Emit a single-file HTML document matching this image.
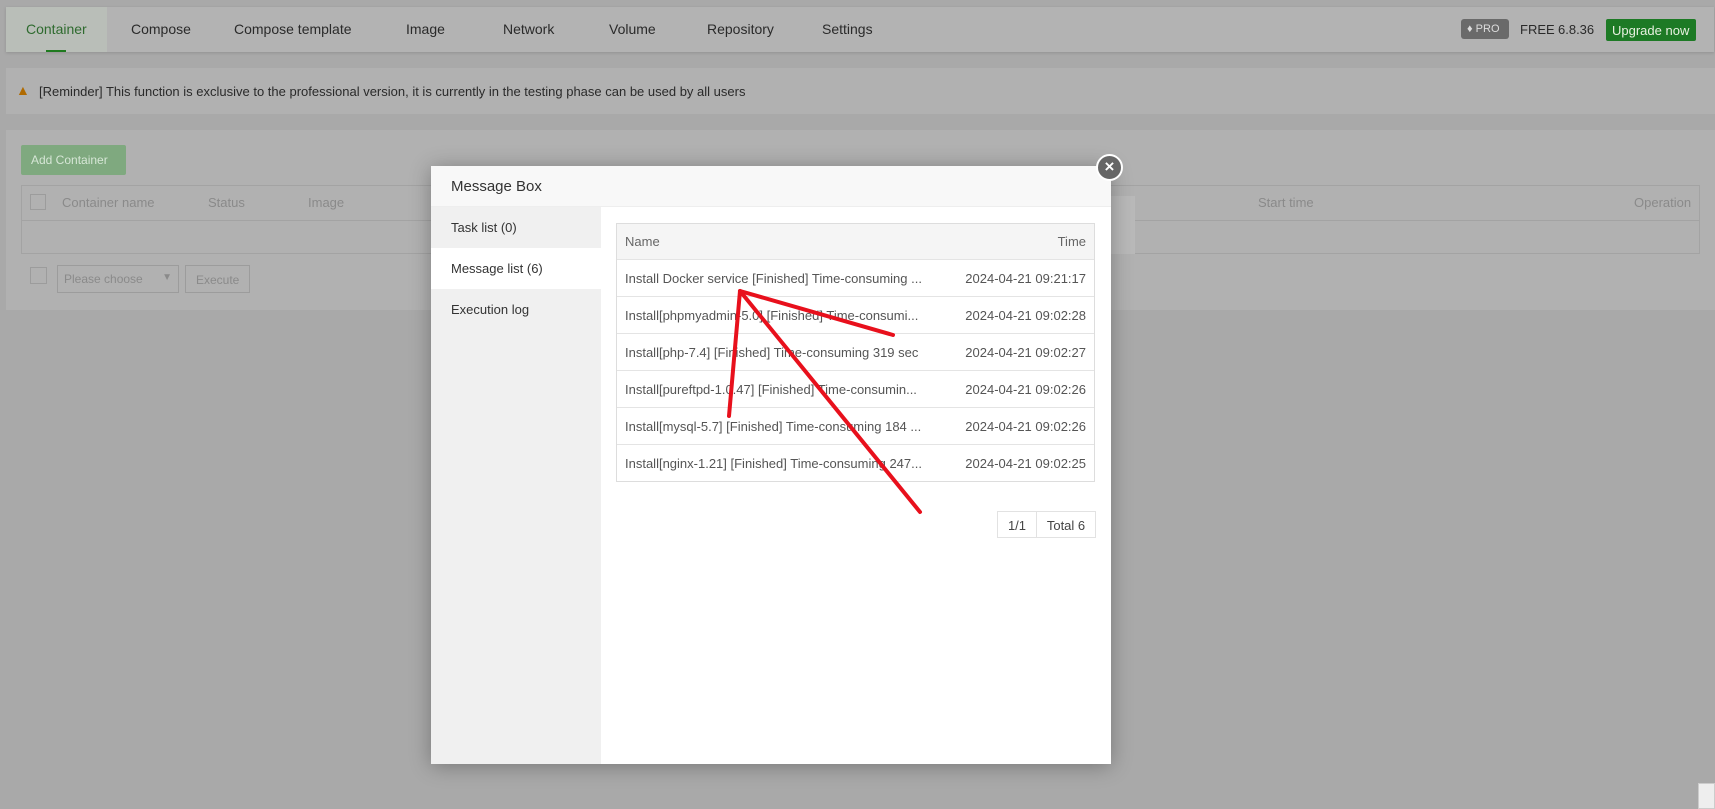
<!DOCTYPE html>
<html><head><meta charset="utf-8"><style>
*{box-sizing:border-box;margin:0;padding:0}
body{width:1715px;height:809px;background:#a9a9a9;font-family:"Liberation Sans",sans-serif;position:relative;overflow:hidden;color:#333}
.abs{position:absolute;white-space:nowrap}
.nav{left:6px;top:7px;width:1708px;height:45px;background:#b3b3b3;box-shadow:0 1px 3px rgba(0,0,0,.15)}
.nav span{position:absolute;top:14px;font-size:14px;color:#2a2a2a}
.rem{left:6px;top:68px;width:1709px;height:46px;background:#b1b1b1;font-size:13px;color:#2a2a2a}
.panel{left:6px;top:130px;width:1709px;height:180px;background:#b1b1b1}
.g{color:#8a8a8a;font-size:13px}
.modal{left:431px;top:166px;width:680px;height:598px;background:#fff;box-shadow:0 2px 20px rgba(0,0,0,.3)}
.mh{left:0;top:0;width:680px;height:41px;background:#f8f8f8;border-bottom:1px solid #eee;font-size:15px;padding:12px 20px;color:#333}
.side{left:0;top:41px;width:170px;height:557px;background:#f0f0f0}
.side div{height:41px;padding:13px 20px;font-size:13px;color:#333}
.tbl{left:185px;top:57px;width:479px;border:1px solid #ddd;font-size:13px}
.tbl .r{height:37px;border-top:1px solid #e4e4e4;display:flex;justify-content:space-between;align-items:center;padding:0 8px;color:#555}
.tbl .h{background:#f5f5f5;border-top:none;height:35px;color:#666}
</style></head><body>
<div class="abs nav">
<div class="abs" style="left:0;top:0;width:101px;height:45px;background:#b9beb8"></div>
<span style="left:20px;color:#2f6b2f">Container</span>
<div class="abs" style="left:40px;top:43px;width:20px;height:2px;background:#1f7a1f"></div>
<span style="left:125px">Compose</span><span style="left:228px">Compose template</span><span style="left:400px">Image</span><span style="left:497px">Network</span><span style="left:603px">Volume</span><span style="left:701px">Repository</span><span style="left:816px">Settings</span>
<div class="abs" style="left:1455px;top:12px;width:48px;height:20px;background:#6a6a6a;border-radius:3px;color:#ddd;font-size:11px;padding:4px 6px">♦ PRO</div>
<span style="left:1514px;font-size:13px;top:15px">FREE</span><span style="left:1552px;font-size:13px;top:15px">6.8.36</span>
<div class="abs" style="left:1600px;top:12px;width:90px;height:22px;background:#1d7a25;border-radius:2px;color:#e8f0e0;font-size:13px;padding:4px 6px">Upgrade now</div>
</div>
<div class="abs rem"><span class="abs" style="left:10px;top:14px;color:#b06a00;font-size:14px">▲</span><span class="abs" style="left:33px;top:16px">[Reminder] This function is exclusive to the professional version, it is currently in the testing phase can be used by all users</span></div>
<div class="abs panel">
<div class="abs" style="left:15px;top:15px;width:105px;height:30px;background:#7fa97f;border-radius:2px;color:#d6e6d6;font-size:12px;padding:8px 10px">Add Container</div>
<div class="abs" style="left:15px;top:55px;width:1679px;height:69px;border:1px solid #a3a3a3"></div>
<div class="abs" style="left:15px;top:90px;width:1679px;height:1px;background:#a3a3a3"></div>
<div class="abs" style="left:24px;top:64px;width:16px;height:16px;border:1px solid #9c9c9c"></div>
<span class="abs g" style="left:56px;top:65px">Container name</span><span class="abs g" style="left:202px;top:65px">Status</span><span class="abs g" style="left:302px;top:65px">Image</span><span class="abs g" style="left:1252px;top:65px">Start time</span><span class="abs g" style="left:1628px;top:65px">Operation</span>
<div class="abs" style="left:24px;top:137px;width:17px;height:17px;border:1px solid #9c9c9c"></div>
<div class="abs g" style="left:51px;top:135px;width:122px;height:28px;border:1px solid #9c9c9c;padding:6px 6px;font-size:12px">Please choose <span style="float:right;font-size:10px">▼</span></div>
<div class="abs g" style="left:179px;top:135px;width:65px;height:28px;border:1px solid #9c9c9c;padding:7px 10px;font-size:12px">Execute</div>
</div>
<div class="abs" style="left:1111px;top:196px;width:24px;height:58px;background:#b9b9b9"></div>
<div class="abs modal">
<div class="abs mh">Message Box</div>
<div class="abs side"><div>Task list (0)</div><div style="background:#fff">Message list (6)</div><div>Execution log</div></div>
<div class="abs tbl">
<div class="r h"><span>Name</span><span>Time</span></div>
<div class="r"><span>Install Docker service [Finished] Time-consuming ...</span><span>2024-04-21 09:21:17</span></div>
<div class="r"><span>Install[phpmyadmin-5.0] [Finished] Time-consumi...</span><span>2024-04-21 09:02:28</span></div>
<div class="r"><span>Install[php-7.4] [Finished] Time-consuming 319 sec</span><span>2024-04-21 09:02:27</span></div>
<div class="r"><span>Install[pureftpd-1.0.47] [Finished] Time-consumin...</span><span>2024-04-21 09:02:26</span></div>
<div class="r"><span>Install[mysql-5.7] [Finished] Time-consuming 184 ...</span><span>2024-04-21 09:02:26</span></div>
<div class="r"><span>Install[nginx-1.21] [Finished] Time-consuming 247...</span><span>2024-04-21 09:02:25</span></div>
</div>
<div class="abs" style="left:566px;top:345px;width:99px;height:27px;border:1px solid #e2e2e2;font-size:13px;color:#444;display:flex"><span style="width:39px;border-right:1px solid #e2e2e2;text-align:center;padding-top:6px">1/1</span><span style="flex:1;text-align:center;padding-top:6px">Total 6</span></div>
</div>
<div class="abs" style="left:1096px;top:154px;width:27px;height:27px;border-radius:50%;background:#666;border:2px solid #fff;color:#fff;font-size:17px;line-height:22px;text-align:center;font-weight:bold">×</div>
<svg class="abs" style="left:0;top:0" width="1715" height="809"><g stroke="#e8101c" stroke-width="4" stroke-linecap="round" fill="none"><path d="M740 291 L893 335"/><path d="M740 291 L920 512"/><path d="M740 291 L729 416"/></g></svg>
<div class="abs" style="left:1698px;top:783px;width:17px;height:26px;background:#eee;border:1px solid #ccc"></div>
</body></html>
